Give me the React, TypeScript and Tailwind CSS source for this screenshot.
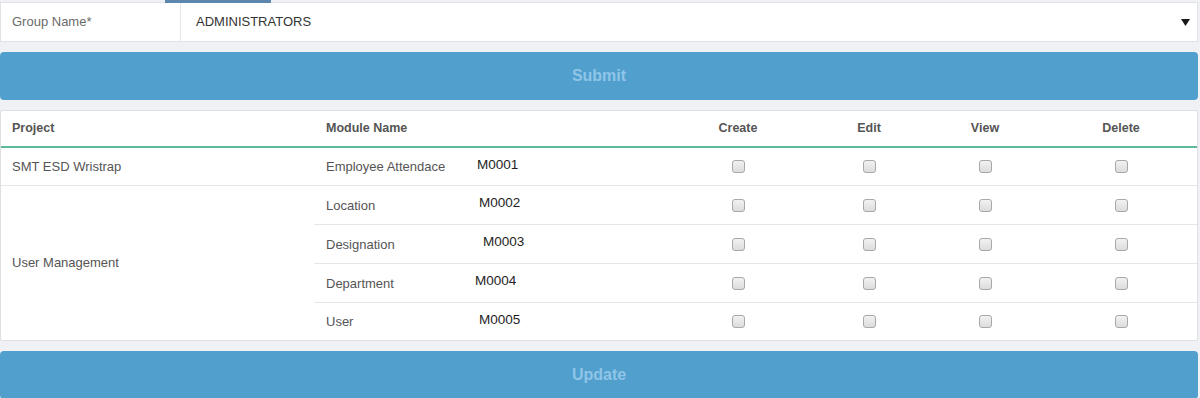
import React from "react";

const rows = [
  { name: "Employee Attendace", code: "M0001", nameW: "w-[151px]" },
  { name: "Location", code: "M0002", nameW: "w-[153px]" },
  { name: "Designation", code: "M0003", nameW: "w-[157px]" },
  { name: "Department", code: "M0004", nameW: "w-[149px]" },
  { name: "User", code: "M0005", nameW: "w-[153px]" },
];

function Box() {
  return (
    <div className="flex items-center justify-center">
      <div className="w-[13px] h-[13px] rounded-[3px] border border-[#a8a8a8] bg-gradient-to-b from-[#f2f2f2] to-[#dcdcdc]" />
    </div>
  );
}

function Checks() {
  return (
    <>
      <Box />
      <Box />
      <Box />
      <Box />
    </>
  );
}

export default function App() {
  return (
    <div
      className="w-[1200px] h-[398px] overflow-hidden bg-[#f0f1f5] pr-[2px]"
      style={{ fontFamily: '"Liberation Sans", Arial, sans-serif' }}
    >
      <div className="h-[2px] relative">
        <div className="absolute left-[165px] top-0 w-[106px] h-[3px] bg-[#5b87ad] z-10" />
      </div>
      <div className="flex h-[40px] bg-white border border-[#e1e2e6]">
        <div className="w-[180px] border-r border-[#e6e6e6] flex items-center pl-[11px] text-[13px] text-[#6b6b6b]">
          Group Name*
        </div>
        <div className="flex-1 flex items-center pl-[15px] pr-[7px] text-[13px] text-[#333]">
          <span className="flex-1">ADMINISTRATORS</span>
          <svg width="9" height="7" viewBox="0 0 9 7" className="mt-[1px]">
            <path d="M0 0 L9 0 L4.5 7 Z" fill="#1a1a1a" />
          </svg>
        </div>
      </div>

      <div className="mt-[10px] h-[48px] rounded-[4px] bg-[#519fcd] flex items-center justify-center text-[16px] font-bold text-[#8fc5e8]">
        Submit
      </div>

      <div className="mt-[10px] bg-white border border-[#dedfe3] rounded-[2px]">
        <div className="grid grid-cols-[313px_349px_150px_112px_120px_1fr] h-[37px] items-center border-b-2 border-[#5cba98] text-[12.5px] font-bold text-[#555]">
          <div className="pl-[11px]">Project</div>
          <div className="pl-[12px]">Module Name</div>
          <div className="text-center">Create</div>
          <div className="text-center">Edit</div>
          <div className="text-center">View</div>
          <div className="text-center">Delete</div>
        </div>

        <div className="grid grid-cols-[313px_349px_150px_112px_120px_1fr] h-[38px] items-center border-b border-[#e6e6e6] text-[13px] text-[#555]">
          <div className="pl-[11px]">SMT ESD Wristrap</div>
          <div className="pl-[12px] flex items-center">
            <span className={rows[0].nameW}>{rows[0].name}</span>
            <span className="text-[13.5px] text-[#1e1e1e] -mt-[3px]">{rows[0].code}</span>
          </div>
          <Checks />
        </div>

        <div className="flex">
          <div className="w-[313px] flex items-center pl-[11px] text-[13px] text-[#555]">User Management</div>
          <div className="flex-1">
            {rows.slice(1).map((r, i) => (
              <div
                key={r.code}
                className={
                  "grid grid-cols-[349px_150px_112px_120px_1fr] items-center text-[13px] text-[#555] " +
                  (i < 3 ? "h-[39px] border-b border-[#e6e6e6]" : "h-[37px]")
                }
              >
                <div className="pl-[12px] flex items-center pt-[1px]">
                  <span className={r.nameW}>{r.name}</span>
                  <span className="text-[13.5px] text-[#1e1e1e] -mt-[4px]">{r.code}</span>
                </div>
                <Checks />
              </div>
            ))}
          </div>
        </div>
      </div>

      <div className="mt-[10px] h-[48px] rounded-[4px] bg-[#519fcd] flex items-center justify-center text-[16px] font-bold text-[#8fc5e8]">
        Update
      </div>
    </div>
  );
}
